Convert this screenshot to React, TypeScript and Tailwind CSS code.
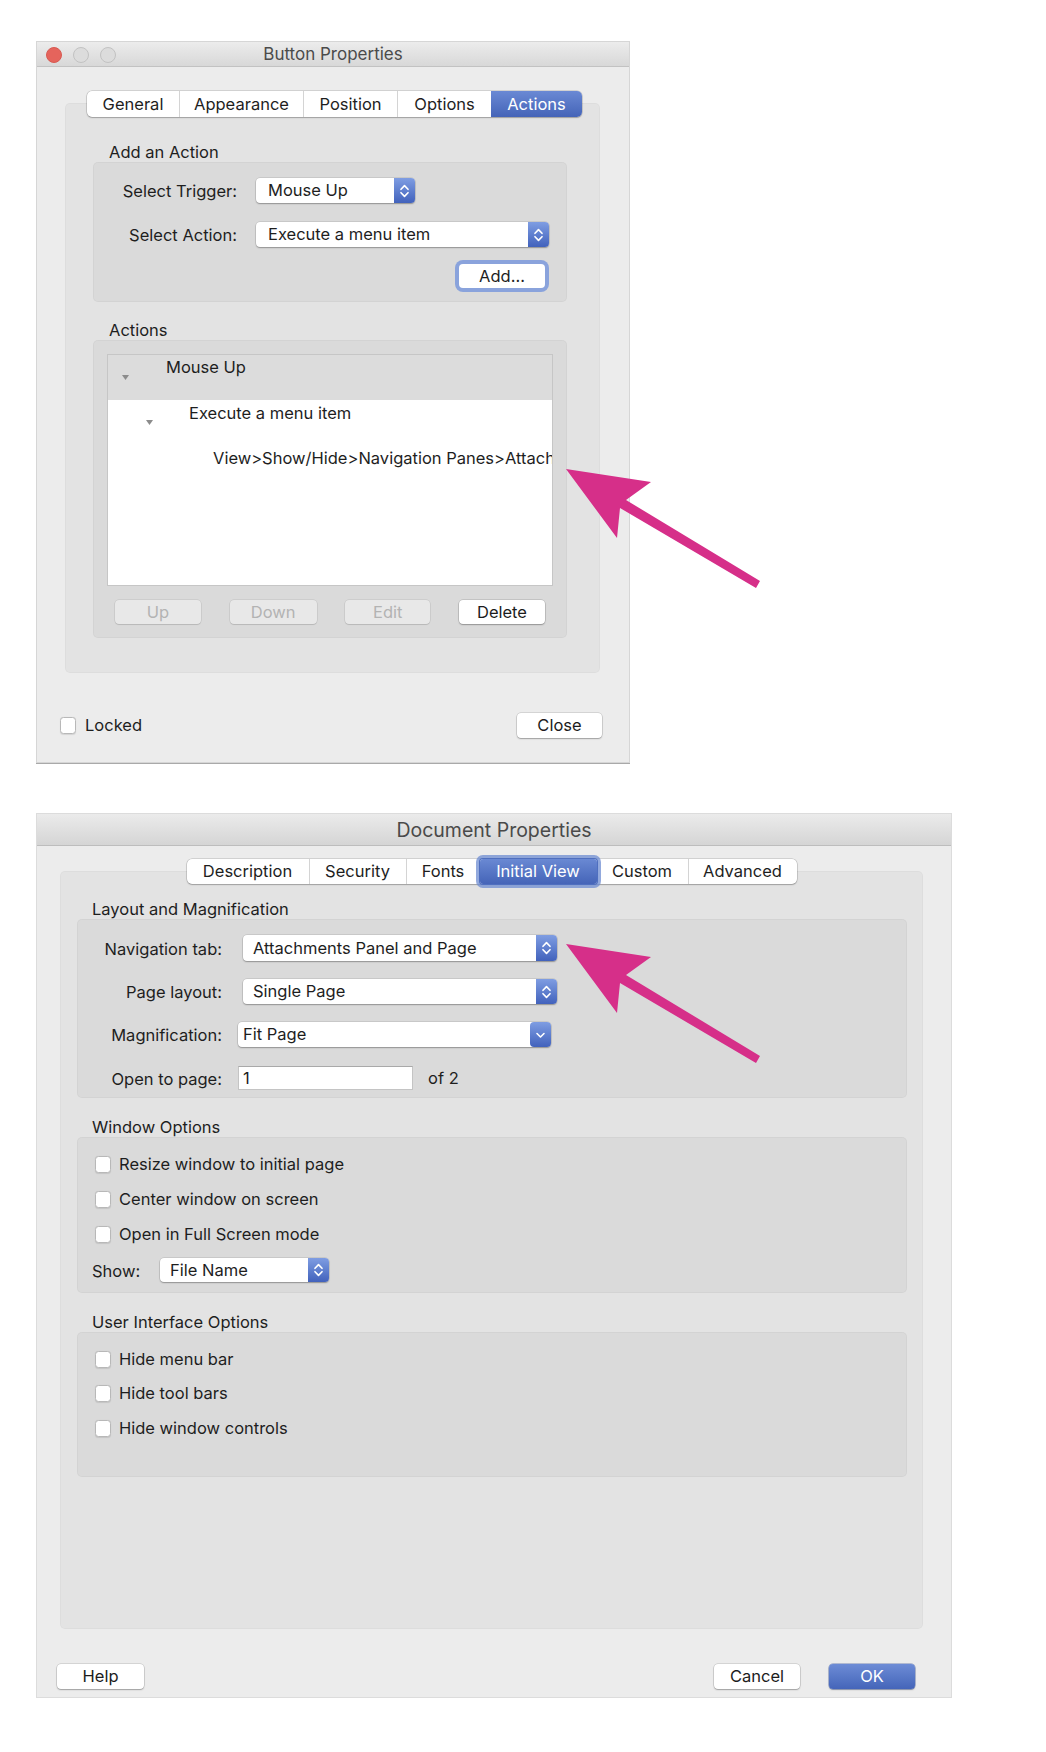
import React from "react";

function Chevrons({ single = false }: { single?: boolean }) {
  return (
    <svg width="11" height="16" viewBox="0 0 11 16" fill="none" stroke="white" strokeWidth="1.6" strokeLinecap="round" strokeLinejoin="round">
      {single ? (
        <path d="M2 6.5 L5.5 10 L9 6.5" />
      ) : (
        <>
          <path d="M2 6.3 L5.5 2.6 L9 6.3" />
          <path d="M2 9.7 L5.5 13.4 L9 9.7" />
        </>
      )}
    </svg>
  );
}

function Popup({ text, className = "", pad = "pl-[12px]", combo = false }: { text: string; className?: string; pad?: string; combo?: boolean }) {
  return (
    <div className={`flex rounded-[4px] bg-white shadow-[0_0_0_0.5px_rgba(0,0,0,0.15),0_1px_1.5px_rgba(0,0,0,0.28)] ${className}`}>
      <div className={`flex flex-1 items-center overflow-hidden whitespace-nowrap ${pad}`}>{text}</div>
      <div className={`flex w-[21px] items-center justify-center bg-linear-to-b from-[#7f9de2] to-[#4262bc] ${combo ? "rounded-[4px]" : "rounded-r-[4px]"}`}>
        <Chevrons single={combo} />
      </div>
    </div>
  );
}

function Checkbox() {
  return <div className="h-[17px] w-[16px] shrink-0 rounded-[3.5px] border border-[#b8b8b8] bg-white shadow-[0_0.5px_1px_rgba(0,0,0,0.1)]" />;
}

function Btn({ children, className = "", disabled = false }: { children: React.ReactNode; className?: string; disabled?: boolean }) {
  return (
    <div
      className={`flex items-center justify-center rounded-[4px] ${
        disabled
          ? "bg-[#e8e8e8] text-[#b3b3b3] shadow-[0_0_0_0.5px_rgba(0,0,0,0.12),0_1px_1px_rgba(0,0,0,0.1)]"
          : "bg-white text-[#1c1c1c] shadow-[0_0_0_0.5px_rgba(0,0,0,0.2),0_1px_1.5px_rgba(0,0,0,0.25)]"
      } ${className}`}
    >
      {children}
    </div>
  );
}

function Tri() {
  return (
    <svg width="7" height="5" viewBox="0 0 7 5">
      <path d="M0 0 L7 0 L3.5 5 Z" fill="#8c8c8c" />
    </svg>
  );
}

function ButtonProperties() {
  return (
    <div className="flex h-[720px] w-[592px] flex-col bg-[#ececec] shadow-[0_0_0_1px_#d6d6d6,0_1px_0_1px_#a9a9a9]">
      <div className="relative flex h-[25px] items-center justify-center border-b border-[#c2c2c2] bg-linear-to-b from-[#ececec] to-[#d8d8d8] pt-[2px]">
        <div className="absolute left-[9px] top-[5px] flex gap-[11px]">
          <div className="h-[16px] w-[16px] rounded-full border border-[#d85a52] bg-[#e5645c]" />
          <div className="h-[16px] w-[16px] rounded-full border border-[#c2c2c2] bg-[#dcdcdc]" />
          <div className="h-[16px] w-[16px] rounded-full border border-[#c2c2c2] bg-[#dcdcdc]" />
        </div>
        <span className="text-[17px] text-[#4b4b4b]">Button Properties</span>
      </div>

      <div className="ml-[28px] mr-[29px] mt-[24px] flex flex-col">
        <div className="relative z-10 flex justify-center pl-[4px]">
          <div className="flex h-[26px] rounded-[5px] bg-white shadow-[0_0_0_0.5px_rgba(0,0,0,0.22),0_1px_1.5px_rgba(0,0,0,0.22)]">
            <div className="flex w-[93px] items-center justify-center border-r border-[#d4d4d4]">General</div>
            <div className="flex w-[124px] items-center justify-center border-r border-[#d4d4d4]">Appearance</div>
            <div className="flex w-[94px] items-center justify-center border-r border-[#d4d4d4]">Position</div>
            <div className="flex w-[93px] items-center justify-center">Options</div>
            <div className="flex w-[91px] items-center justify-center rounded-r-[5px] bg-linear-to-b from-[#6a89d4] to-[#4564b8] text-white">Actions</div>
          </div>
        </div>
        <div className="-mt-[14px] flex h-[570px] flex-col rounded-[5px] bg-[#e3e3e3] pl-[28px] pr-[33px] pt-[39px] shadow-[inset_0_0_0_1px_rgba(0,0,0,0.025)]">
          <div className="h-[20px] pl-[16px] leading-[20px]">Add an Action</div>
          <div className="flex h-[140px] flex-col rounded-[5px] bg-[#dadada] pt-[16px] shadow-[inset_0_0_0_1px_rgba(0,0,0,0.03)]">
            <div className="flex h-[25px] items-center">
              <div className="w-[144px] pt-[2px] text-right">Select Trigger:</div>
              <Popup text="Mouse Up" className="ml-[19px] h-[25px] w-[159px]" />
            </div>
            <div className="mt-[19px] flex h-[25px] items-center">
              <div className="w-[144px] pt-[2px] text-right">Select Action:</div>
              <Popup text="Execute a menu item" className="ml-[19px] h-[25px] w-[293px]" />
            </div>
            <div className="ml-[362px] mt-[13px] h-[32px] w-[94px] rounded-[8px] bg-[#8aa3dc] p-[4px]">
              <div className="flex h-[24px] items-center justify-center rounded-[4px] bg-white">Add...</div>
            </div>
          </div>
          <div className="mt-[18px] h-[20px] pl-[16px] leading-[20px]">Actions</div>
          <div className="flex h-[298px] flex-col rounded-[5px] bg-[#dadada] p-[14px] shadow-[inset_0_0_0_1px_rgba(0,0,0,0.03)]">
            <div className="h-[233px] overflow-hidden border border-[#c6c6c6] bg-white">
              <div className="flex h-[45px] bg-[#dcdcdc]">
                <div className="w-[58px] shrink-0 pl-[14px] pt-[20px]">
                  <Tri />
                </div>
                <div className="pt-[2px] leading-[20px]">Mouse Up</div>
              </div>
              <div className="flex h-[45px]">
                <div className="w-[81px] shrink-0 pl-[38px] pt-[20px]">
                  <Tri />
                </div>
                <div className="pt-[3px] leading-[20px]">Execute a menu item</div>
              </div>
              <div className="flex h-[45px]">
                <div className="w-[105px] shrink-0" />
                <div className="whitespace-nowrap pt-[3px] leading-[20px]">View&gt;Show/Hide&gt;Navigation Panes&gt;Attachments</div>
              </div>
            </div>
            <div className="mt-[14px] flex justify-between px-[8px]">
              <Btn disabled className="h-[24px] w-[86px]">Up</Btn>
              <Btn disabled className="h-[24px] w-[87px]">Down</Btn>
              <Btn disabled className="h-[24px] w-[85px]">Edit</Btn>
              <Btn className="h-[24px] w-[86px]">Delete</Btn>
            </div>
          </div>
        </div>
      </div>

      <div className="mt-[40px] flex h-[25px] items-center justify-between pl-[23px] pr-[27px]">
        <div className="flex items-center gap-[9px]">
          <Checkbox />
          <span>Locked</span>
        </div>
        <Btn className="h-[25px] w-[85px]">Close</Btn>
      </div>
    </div>
  );
}

function CheckRow({ label }: { label: string }) {
  return (
    <div className="flex h-[20px] items-center gap-[8px] pl-[18px]">
      <Checkbox />
      <span>{label}</span>
    </div>
  );
}

function DocumentProperties() {
  return (
    <div className="flex h-[883px] w-[914px] flex-col bg-[#ececec] shadow-[0_0_0_1px_#dcdcdc]">
      <div className="flex h-[32px] items-center justify-center border-b border-[#bdbdbd] bg-linear-to-b from-[#ebebeb] to-[#d5d5d5] pt-[3px]">
        <span className="text-[19.5px] text-[#4a4a4a]">Document Properties</span>
      </div>

      <div className="ml-[23px] mr-[28px] mt-[13px] flex flex-col">
        <div className="relative z-10 flex justify-center">
          <div className="flex h-[25px] rounded-[5px] bg-white shadow-[0_0_0_0.5px_rgba(0,0,0,0.22),0_1px_1.5px_rgba(0,0,0,0.22)]">
            <div className="flex w-[123px] items-center justify-center border-r border-[#d4d4d4]">Description</div>
            <div className="flex w-[97px] items-center justify-center border-r border-[#d4d4d4]">Security</div>
            <div className="flex w-[73px] items-center justify-center">Fonts</div>
            <div className="flex w-[117px] items-center justify-center rounded-[3px] bg-linear-to-b from-[#6a89d3] to-[#4564b8] text-white shadow-[0_0_0_1px_#4f6fbf,0_0_0_4px_rgba(110,140,210,0.75)]">
              Initial View
            </div>
            <div className="flex w-[92px] items-center justify-center border-r border-[#d4d4d4]">Custom</div>
            <div className="flex w-[108px] items-center justify-center">Advanced</div>
          </div>
        </div>
        <div className="-mt-[13px] flex h-[758px] flex-col rounded-[5px] bg-[#e3e3e3] pl-[17px] pr-[16px] pt-[28px] shadow-[inset_0_0_0_1px_rgba(0,0,0,0.025)]">
          <div className="h-[20px] pl-[15px] leading-[20px]">Layout and Magnification</div>
          <div className="flex h-[179px] flex-col rounded-[5px] bg-[#dadada] pt-[16px] shadow-[inset_0_0_0_1px_rgba(0,0,0,0.03)]">
            <div className="flex h-[26px] items-center">
              <div className="w-[145px] pt-[2px] text-right">Navigation tab:</div>
              <Popup text="Attachments Panel and Page" pad="pl-[10px]" className="ml-[21px] h-[26px] w-[314px]" />
            </div>
            <div className="mt-[18px] flex h-[25px] items-center">
              <div className="w-[145px] pt-[2px] text-right">Page layout:</div>
              <Popup text="Single Page" pad="pl-[10px]" className="ml-[21px] h-[25px] w-[314px]" />
            </div>
            <div className="mt-[18px] flex h-[25px] items-center">
              <div className="w-[145px] pt-[2px] text-right">Magnification:</div>
              <Popup text="Fit Page" combo pad="pl-[5px]" className="ml-[16px] h-[25px] w-[313px]" />
            </div>
            <div className="mt-[19px] flex h-[24px] items-center">
              <div className="w-[145px] pt-[2px] text-right">Open to page:</div>
              <div className="ml-[16px] flex h-[24px] w-[175px] items-center border border-[#c4c4c4] border-t-[#a9a9a9] bg-white pl-[4px]">1</div>
              <span className="ml-[15px]">of 2</span>
            </div>
          </div>

          <div className="mt-[19px] h-[20px] pl-[15px] leading-[20px]">Window Options</div>
          <div className="flex h-[156px] flex-col rounded-[5px] bg-[#dadada] pt-[17px] shadow-[inset_0_0_0_1px_rgba(0,0,0,0.03)]">
            <div className="flex flex-col gap-[15px]">
              <CheckRow label="Resize window to initial page" />
              <CheckRow label="Center window on screen" />
              <CheckRow label="Open in Full Screen mode" />
            </div>
            <div className="mt-[14px] flex h-[24px] items-center pl-[15px]">
              <span className="w-[68px] pt-[2px]">Show:</span>
              <Popup text="File Name" pad="pl-[10px]" className="h-[24px] w-[169px]" />
            </div>
          </div>

          <div className="mt-[19px] h-[20px] pl-[15px] leading-[20px]">User Interface Options</div>
          <div className="flex h-[145px] flex-col gap-[14.5px] rounded-[5px] bg-[#dadada] pt-[17px] shadow-[inset_0_0_0_1px_rgba(0,0,0,0.03)]">
            <CheckRow label="Hide menu bar" />
            <CheckRow label="Hide tool bars" />
            <CheckRow label="Hide window controls" />
          </div>
        </div>
      </div>

      <div className="mt-[35px] flex h-[25px] items-center justify-between pl-[20px] pr-[36px]">
        <Btn className="h-[25px] w-[87px]">Help</Btn>
        <div className="flex gap-[29px]">
          <Btn className="h-[25px] w-[86px]">Cancel</Btn>
          <div className="flex h-[25px] w-[86px] items-center justify-center rounded-[4px] bg-linear-to-b from-[#6d8cd6] to-[#4565b9] text-white shadow-[0_0_0_0.5px_rgba(40,70,150,0.6),0_1px_1.5px_rgba(0,0,0,0.25)]">
            OK
          </div>
        </div>
      </div>
    </div>
  );
}

export default function App() {
  return (
    <div className="relative h-[1752px] w-[1046px] overflow-hidden bg-white font-[Inter,sans-serif] text-[16.5px] text-[#1e1e1e]">
      <div className="flex flex-col gap-[52px] pl-[37px] pt-[42px]">
        <ButtonProperties />
        <DocumentProperties />
      </div>
      <svg className="pointer-events-none absolute left-0 top-0" width="1046" height="1752" viewBox="0 0 1046 1752">
        <polygon points="566,469 651,482 626,500 760,581 756,588 620,508 617,538" fill="#d62f89" />
        <polygon points="566,944 651,957 626,975 760,1056 756,1063 620,983 617,1013" fill="#d62f89" />
      </svg>
    </div>
  );
}
